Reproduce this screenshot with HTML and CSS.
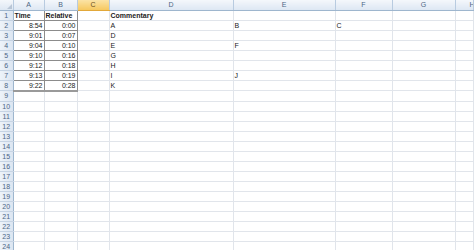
FILE: index.html
```html
<!DOCTYPE html>
<html lang="en">
<head>
    <meta charset="UTF-8">
    <meta name="viewport" content="width=device-width, initial-scale=1.0">
    <title>Sheet1</title>
    <link rel="stylesheet" href="styles.css">
</head>
<body>
    <table class="sheet" id="sheet">
        <colgroup>
            <col class="w-head">
            <col class="w-a">
            <col class="w-b">
            <col class="w-c">
            <col class="w-d">
            <col class="w-e">
            <col class="w-f">
            <col class="w-g">
            <col>
        </colgroup>
        <thead>
            <tr>
                <th class="corner"><span class="corner-mark"></span></th>
                <th>A</th>
                <th>B</th>
                <th class="active">C</th>
                <th>D</th>
                <th>E</th>
                <th>F</th>
                <th>G</th>
                <th class="cut">H</th>
            </tr>
        </thead>
        <tbody>
            <tr>
                <th class="rownum">1</th>
                <td class="box bold">Time</td>
                <td class="box bold">Relative</td>
                <td></td>
                <td class="bold">Commentary</td>
                <td></td><td></td><td></td><td></td>
            </tr>
            <tr>
                <th class="rownum">2</th>
                <td class="box num">8:54</td>
                <td class="box num">0:00</td>
                <td></td>
                <td>A</td><td>B</td><td>C</td><td></td><td></td>
            </tr>
            <tr>
                <th class="rownum">3</th>
                <td class="box num">9:01</td>
                <td class="box num">0:07</td>
                <td></td>
                <td>D</td><td></td><td></td><td></td><td></td>
            </tr>
            <tr>
                <th class="rownum">4</th>
                <td class="box num">9:04</td>
                <td class="box num">0:10</td>
                <td></td>
                <td>E</td><td>F</td><td></td><td></td><td></td>
            </tr>
            <tr>
                <th class="rownum">5</th>
                <td class="box num">9:10</td>
                <td class="box num">0:16</td>
                <td></td>
                <td>G</td><td></td><td></td><td></td><td></td>
            </tr>
            <tr>
                <th class="rownum">6</th>
                <td class="box num">9:12</td>
                <td class="box num">0:18</td>
                <td></td>
                <td>H</td><td></td><td></td><td></td><td></td>
            </tr>
            <tr>
                <th class="rownum">7</th>
                <td class="box num">9:13</td>
                <td class="box num">0:19</td>
                <td></td>
                <td>I</td><td>J</td><td></td><td></td><td></td>
            </tr>
            <tr>
                <th class="rownum">8</th>
                <td class="box num">9:22</td>
                <td class="box num">0:28</td>
                <td></td>
                <td>K</td><td></td><td></td><td></td><td></td>
            </tr>
        </tbody>
    </table>

    <script>
        // empty rows below the data
        const body = document.querySelector("#sheet tbody");
        for (let r = 9; r <= 24; r++) {
            const tr = document.createElement("tr");
            tr.innerHTML = `<th class="rownum">${r}</th>` + "<td></td>".repeat(8);
            body.appendChild(tr);
        }
    </script>
</body>
</html>
```

FILE: styles.css
```css
body {
    margin: 0;
    background: #fff;
    font-family: "Liberation Sans", Arial, sans-serif;
    overflow: hidden;
}
.sheet {
    border-collapse: collapse;
    table-layout: fixed;
    width: 474px;
    font-size: 7px;
    color: #222;
}
.w-head { width: 13px; }
.w-a { width: 31px; }
.w-b { width: 33px; }
.w-c { width: 32px; }
.w-d { width: 124px; }
.w-e { width: 102px; }
.w-f { width: 57px; }
.w-g { width: 63px; }

.sheet tr {
    height: 10px;
}
.sheet th,
.sheet td {
    padding: 0 1px;
    height: 9px;
    line-height: 9px;
    white-space: nowrap;
    overflow: hidden;
    border-right: 1px solid #e1e5eb;
    border-bottom: 1px solid #e1e5eb;
    text-align: left;
}
.sheet thead th {
    background: linear-gradient(#f4f7fb, #dde7f3);
    border-right: 1px solid #b8cbe0;
    border-bottom: 1px solid #9eb6ce;
    color: #4d6685;
    font-weight: normal;
    text-align: center;
}
.sheet thead th.active {
    background: linear-gradient(#fbe3a5, #f6c85f);
    border-bottom-color: #e2a83a;
    color: #6a5020;
}
.sheet thead th.cut {
    text-align: left;
    padding-left: 14px;
}
.corner {
    position: relative;
}
.corner-mark {
    position: absolute;
    right: 1px;
    bottom: 1px;
    width: 0;
    height: 0;
    border-left: 5px solid transparent;
    border-bottom: 5px solid #b9c6d6;
}
.sheet .rownum {
    background: linear-gradient(90deg, #eef3f9, #dbe5f1);
    border-right: 1px solid #9eb6ce;
    border-bottom: 1px solid #c6d4e4;
    color: #4d6685;
    font-weight: normal;
    text-align: center;
    padding: 0;
}
.sheet td.box {
    border: 1px solid #8c8c8c;
}
.sheet tr:nth-child(8) td.box {
    border-bottom: 2px solid #9a9a9a;
}
.bold {
    font-weight: bold;
}
.sheet td.num {
    text-align: right;
}
```
